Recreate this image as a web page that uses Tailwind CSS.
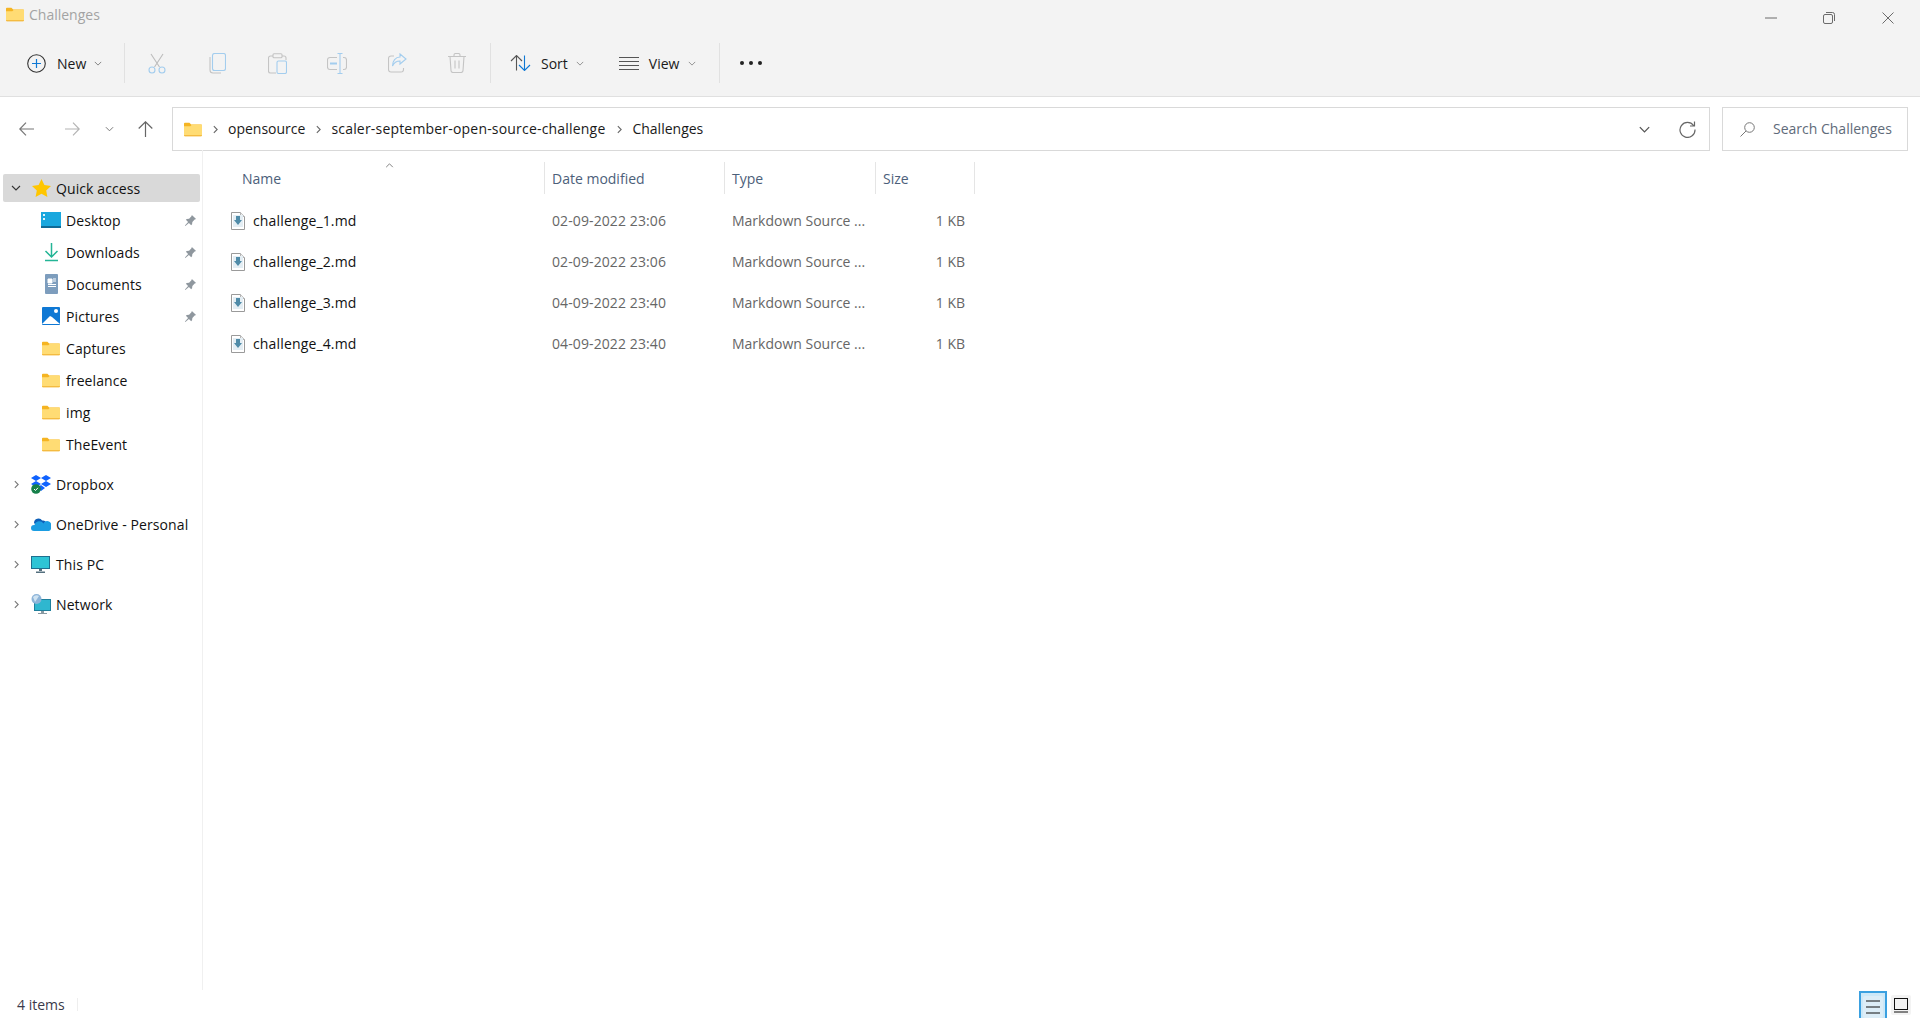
<!DOCTYPE html>
<html lang="en">
<head>
<meta charset="UTF-8" />
<title>Challenges</title>
<script src="https://cdn.jsdelivr.net/npm/@tailwindcss/browser@4"></script>
</head>
<body class="h-[1018px] w-[1920px] overflow-hidden bg-white font-['Open_Sans','Noto_Sans',sans-serif] text-[14px] text-[#1a1a1a]">
<svg class="hidden">
  <symbol id="folder" viewBox="0 0 20 16">
    <path d="M0 1.500a1 1 0 0 1 1-1h5l2 2h11a1 1 0 0 1 1 1v10a1 1 0 0 1-1 1H1a1 1 0 0 1-1-1z" fill="#f5b422"/>
    <path d="M0 4.500h7l2-2h10a1 1 0 0 1 1 1v11a1 1 0 0 1-1 1H1a1 1 0 0 1-1-1z" fill="#ffdc74"/>
    <path d="M0 14.500h20a1 1 0 0 1-1 1H1a1 1 0 0 1-1-1z" fill="#f0b030"/>
  </symbol>
  <symbol id="pin" viewBox="0 0 14 14">
    <path d="M8.500 1l4.500 4.500-1.500.5-2.500 2.500-.3 2.500-1 1-2.400-2.400L1.500 13 1 12.500l3.400-3.800L2 6.300l1-1 2.500-.3L8 2.500z" fill="#8f979e"/>
  </symbol>
  <symbol id="chev-down" viewBox="0 0 10 6">
    <path d="M1 1l4 4 4-4" fill="none" stroke="currentColor" stroke-width="1.100"/>
  </symbol>
  <symbol id="chev-right" viewBox="0 0 6 10">
    <path d="M1 1l4 4-4 4" fill="none" stroke="currentColor" stroke-width="1.300"/>
  </symbol>
  <symbol id="md" viewBox="0 0 14 18">
    <path d="M.5.500h9l4 4v13H.5z" fill="#fff" stroke="#9a9a9a"/>
    <path d="M9.500.500v4h4" fill="#eee" stroke="#b5b5b5"/>
    <rect x="2" y="3" width="10" height="12" fill="#e4eef4"/>
    <path d="M5 4h4v4h2l-4 5-4-5h2z" fill="#4f8ba8"/>
  </symbol>
</svg>

<!-- title bar + command bar -->
<header class="h-[97px] border-b border-[#e0e0e0] bg-[#f3f3f3]">
  <div class="flex h-[29px] items-center">
    <svg class="ml-[6px] h-[15px] w-[18px]"><use href="#folder"/></svg>
    <span class="ml-[5px] text-[14px] text-[#a3a3a3]">Challenges</span>
    <div class="ml-auto mt-[6px] flex items-center text-[#6b6b6b]">
      <svg class="mr-[46px] h-[12px] w-[12px]" viewBox="0 0 12 12"><path d="M0 6h12" stroke="currentColor"/></svg>
      <svg class="mr-[47px] h-[12px] w-[12px]" viewBox="0 0 12 12"><rect x=".5" y="2.500" width="9" height="9" rx="1.500" fill="none" stroke="currentColor"/><path d="M3 .5h6.500a2 2 0 0 1 2 2V9" fill="none" stroke="currentColor"/></svg>
      <svg class="mr-[26px] h-[12px] w-[12px]" viewBox="0 0 12 12"><path d="M.5.500l11 11M11.500.500l-11 11" stroke="currentColor"/></svg>
    </div>
  </div>
  <div class="flex h-[67px] items-start pt-[14px]">
    <!-- New -->
    <div class="flex h-[40px] w-[124px] items-center pl-[27px]">
      <svg class="h-[19px] w-[19px]" viewBox="0 0 19 19"><circle cx="9.500" cy="9.500" r="8.800" fill="none" stroke="#333" stroke-width="1.100"/><path d="M9.500 5v9M5 9.500h9" stroke="#0f78d4" stroke-width="1.200"/></svg>
      <span class="ml-[11px] text-[14px]">New</span>
      <svg class="ml-[8px] h-[5px] w-[8px] text-[#777]"><use href="#chev-down"/></svg>
    </div>
    <div class="h-[40px] w-px bg-[#e1e1e1]"></div>
    <!-- disabled actions -->
    <div class="flex h-[40px] w-[365px] items-center pl-[2px]">
      <div class="flex w-[60px] justify-center">
        <svg class="h-[21px] w-[18px]" viewBox="0 0 18 21" fill="none" stroke-width="1.100"><path d="M3 1l8.500 13M15 1L6.500 14" stroke="#bcbcbc"/><circle cx="4" cy="17" r="3" stroke="#a3cdee"/><circle cx="14" cy="17" r="3" stroke="#a3cdee"/></svg>
      </div>
      <div class="flex w-[60px] justify-center">
        <svg class="h-[21px] w-[17px]" viewBox="0 0 17 21" fill="none" stroke-width="1.100"><path d="M1 4v13a3 3 0 0 0 3 3h8" stroke="#c4c4c4"/><rect x="3.500" y=".5" width="13" height="17" rx="2" stroke="#a3cdee"/></svg>
      </div>
      <div class="flex w-[60px] justify-center">
        <svg class="h-[21px] w-[19px]" viewBox="0 0 19 21" fill="none" stroke-width="1.100"><path d="M5 3H2.500a2 2 0 0 0-2 2v13a2 2 0 0 0 2 2H8M14 3h2a2 2 0 0 1 2 2v2" stroke="#c4c4c4"/><rect x="5" y=".8" width="9" height="4" rx="1" stroke="#c4c4c4"/><rect x="9" y="8" width="9.500" height="12.500" rx="1.500" stroke="#a3cdee"/></svg>
      </div>
      <div class="flex w-[60px] justify-center">
        <svg class="h-[21px] w-[20px]" viewBox="0 0 20 21" fill="none" stroke-width="1.100"><path d="M10 4.500H3a2.500 2.500 0 0 0-2.500 2.500v7A2.500 2.500 0 0 0 3 16.500h7M16 4.500h1a2.500 2.500 0 0 1 2.500 2.500v7a2.500 2.500 0 0 1-2.500 2.500h-1" stroke="#c4c4c4"/><path d="M13 .5v20M10.500.5h5M10.500 20.500h5" stroke="#a3cdee"/><path d="M3 10.500h7" stroke="#a3cdee" stroke-width="2"/></svg>
      </div>
      <div class="flex w-[60px] justify-center">
        <svg class="h-[20px] w-[19px]" viewBox="0 0 19 20" fill="none" stroke-width="1.100"><path d="M6 3H3a2.500 2.500 0 0 0-2.500 2.500v11A2.500 2.500 0 0 0 3 19h10a2.500 2.500 0 0 0 2.500-2.500V15" stroke="#c4c4c4"/><path d="M12 1l6 5-6 5V8C8 8 6 9.500 4.500 13 4.500 8 7.500 4 12 4z" stroke="#a3cdee"/></svg>
      </div>
      <div class="flex w-[60px] justify-center">
        <svg class="h-[20px] w-[18px]" viewBox="0 0 18 20" fill="none" stroke="#c4c4c4" stroke-width="1.100"><path d="M0 3.500h18M6 3.500V2a1.500 1.500 0 0 1 1.500-1.500h3A1.500 1.500 0 0 1 12 2v1.500M2 3.500l1 14a2 2 0 0 0 2 2h8a2 2 0 0 0 2-2l1-14M7 7.500v8M11 7.500v8"/></svg>
      </div>
    </div>
    <div class="h-[40px] w-px bg-[#e1e1e1]"></div>
    <!-- Sort / View -->
    <div class="flex h-[40px] w-[228px] items-center pl-[19px]">
      <svg class="h-[16px] w-[21px]" viewBox="0 0 21 16" fill="none" stroke-width="1.100"><path d="M1 6l5.500-5.500L12 6M6.500 1v14.500" stroke="#555"/><path d="M9 10l5.500 5.500L20 10M14.500 15V.5" stroke="#0f78d4"/></svg>
      <span class="ml-[10px]">Sort</span>
      <svg class="ml-[8px] h-[5px] w-[8px] text-[#888]"><use href="#chev-down"/></svg>
      <svg class="ml-[35px] h-[13px] w-[20px]" viewBox="0 0 20 13"><path d="M0 .5h20M0 4.500h20M0 8.500h20M0 12.500h20" stroke="#555"/></svg>
      <span class="ml-[10px]">View</span>
      <svg class="ml-[9px] h-[5px] w-[8px] text-[#888]"><use href="#chev-down"/></svg>
    </div>
    <div class="h-[40px] w-px bg-[#e1e1e1]"></div>
    <div class="flex h-[40px] items-center gap-[5px] pl-[20px]">
      <span class="size-[4px] rounded-full bg-[#222]"></span>
      <span class="size-[4px] rounded-full bg-[#222]"></span>
      <span class="size-[4px] rounded-full bg-[#222]"></span>
    </div>
  </div>
</header>

<!-- navigation row -->
<div class="flex h-[53px] items-start pt-[10px]">
  <div class="flex h-[43px] w-[172px] items-center text-[#777]">
    <svg class="ml-[19px] h-[14px] w-[15px]" viewBox="0 0 15 14" fill="none" stroke="#777" stroke-width="1.200"><path d="M7 .7L.8 7 7 13.300M1 7h14"/></svg>
    <svg class="ml-[31px] h-[14px] w-[15px]" viewBox="0 0 15 14" fill="none" stroke="#b4b4b4" stroke-width="1.200"><path d="M8 .7L14.200 7 8 13.300M14 7H0"/></svg>
    <svg class="ml-[25px] h-[6px] w-[9px]"><use href="#chev-down"/></svg>
    <svg class="ml-[24px] h-[16px] w-[15px]" viewBox="0 0 15 16" fill="none" stroke="#666" stroke-width="1.200"><path d="M.7 7.500L7.500.8l6.800 6.700M7.500 1v15"/></svg>
  </div>
  <div class="flex h-[44px] w-[1538px] items-center border border-[#d9d9d9]">
    <svg class="ml-[11px] h-[15px] w-[18px]"><use href="#folder"/></svg>
    <svg class="ml-[11px] h-[9px] w-[5px] text-[#666]"><use href="#chev-right"/></svg>
    <span class="-mt-[2px] ml-[10px]">opensource</span>
    <svg class="ml-[11px] h-[9px] w-[5px] text-[#666]"><use href="#chev-right"/></svg>
    <span class="-mt-[2px] ml-[10px] tracking-[0.19px]">scaler-september-open-source-challenge</span>
    <svg class="ml-[12px] h-[9px] w-[5px] text-[#666]"><use href="#chev-right"/></svg>
    <span class="-mt-[2px] ml-[10px]">Challenges</span>
    <svg class="ml-auto h-[7px] w-[13px] text-[#555]"><use href="#chev-down"/></svg>
    <svg class="ml-[28px] mr-[13px] h-[17px] w-[17px]" viewBox="0 0 17 17" fill="none" stroke="#666" stroke-width="1.200"><path d="M14.600 4.500A7.500 7.500 0 1 0 16 8.500M15.500 .5v4.500H11"/></svg>
  </div>
  <div class="ml-[12px] flex h-[44px] w-[186px] items-center border border-[#d9d9d9]">
    <svg class="ml-[17px] h-[15px] w-[15px]" viewBox="0 0 15 15" fill="none" stroke="#777"><circle cx="9.500" cy="5.500" r="4.800"/><path d="M6 9L.5 14.500"/></svg>
    <span class="-mt-[1px] ml-[18px] text-[#5f6b7a]">Search Challenges</span>
  </div>
</div>

<div class="flex h-[840px]">
  <!-- sidebar -->
  <nav class="h-[840px] w-[203px] border-r border-[#f0f0f0] pl-[3px] pr-[2px] pt-[24px] text-[14px] tracking-[0.1px] text-[#111]">
    <div class="flex h-[28px] items-center rounded-[2px] bg-[#d9d9d9]">
      <svg class="ml-[8px] h-[6px] w-[10px] text-[#333]"><use href="#chev-down"/></svg>
      <svg class="ml-[11px] h-[18px] w-[19px]" viewBox="0 0 19 18"><path d="M9.500 0l2.900 6 6.600.9-4.800 4.500 1.200 6.600-5.900-3.200L3.600 18l1.200-6.600L0 6.900 6.600 6z" fill="#ffc600"/></svg>
      <span class="ml-[5px]">Quick access</span>
    </div>
    <ul class="pt-[2px]">
      <li class="flex h-[32px] items-center pl-[38px]">
        <svg class="h-[16px] w-[20px]" viewBox="0 0 20 16"><rect width="20" height="16" rx="1" fill="#1aa0d8"/><path d="M0 0h20v14H0z" fill="#19a7de"/><path d="M0 14h20v2H0z" fill="#0f6a96"/><path d="M2 2h2v2H2zM2 6h2v2H2z" fill="#dff4fb"/></svg>
        <span class="ml-[5px]">Desktop</span>
        <svg class="ml-auto mr-[3px] h-[13px] w-[13px]"><use href="#pin"/></svg>
      </li>
      <li class="flex h-[32px] items-center pl-[38px]">
        <svg class="h-[20px] w-[20px]" viewBox="0 0 20 20" fill="none" stroke="#24b596" stroke-width="1.500"><path d="M4 18.500h13M10.500 1v13M4.500 9l6 6 6-6"/></svg>
        <span class="ml-[5px]">Downloads</span>
        <svg class="ml-auto mr-[3px] h-[13px] w-[13px]"><use href="#pin"/></svg>
      </li>
      <li class="flex h-[32px] items-center pl-[38px]">
        <svg class="h-[20px] w-[20px]" viewBox="0 0 20 20"><rect x="4" width="13" height="20" rx="1" fill="#7d9dbd"/><path d="M7 5h4v4H7zM12 5h3M12 7h3M7 10.500h8M7 12.500h8" stroke="#fff" fill="#fff"/></svg>
        <span class="ml-[5px]">Documents</span>
        <svg class="ml-auto mr-[3px] h-[13px] w-[13px]"><use href="#pin"/></svg>
      </li>
      <li class="flex h-[32px] items-center pl-[38px]">
        <svg class="h-[18px] w-[20px]" viewBox="0 0 20 18"><rect x="1" width="18" height="18" rx="1" fill="#0f78d4"/><path d="M1 17l8-8 2 1 8 7z" fill="#fff"/><circle cx="15" cy="4" r="2" fill="#fff"/></svg>
        <span class="ml-[5px]">Pictures</span>
        <svg class="ml-auto mr-[3px] h-[13px] w-[13px]"><use href="#pin"/></svg>
      </li>
      <li class="flex h-[32px] items-center pl-[39px]"><svg class="h-[15px] w-[18px]"><use href="#folder"/></svg><span class="ml-[6px]">Captures</span></li>
      <li class="flex h-[32px] items-center pl-[39px]"><svg class="h-[15px] w-[18px]"><use href="#folder"/></svg><span class="ml-[6px]">freelance</span></li>
      <li class="flex h-[32px] items-center pl-[39px]"><svg class="h-[15px] w-[18px]"><use href="#folder"/></svg><span class="ml-[6px]">img</span></li>
      <li class="flex h-[32px] items-center pl-[39px]"><svg class="h-[15px] w-[18px]"><use href="#folder"/></svg><span class="ml-[6px]">TheEvent</span></li>
    </ul>
    <ul class="pt-[4px]">
      <li class="flex h-[40px] items-center">
        <svg class="ml-[11px] h-[9px] w-[5px] text-[#777]"><use href="#chev-right"/></svg>
        <svg class="ml-[12px] h-[19px] w-[20px]" viewBox="0 0 20 19"><path d="M5 0l5 3-5 3-5-3zM15 0l5 3-5 3-5-3zM5 6l5 3-5 3-5-3zM15 6l5 3-5 3-5-3zM10 10l4 3-4 3-4-3z" fill="#0f62fe"/><circle cx="5" cy="14" r="4.800" fill="#16804a"/><path d="M3 14l1.500 1.500L7 12.800" fill="none" stroke="#fff"/></svg>
        <span class="ml-[5px]">Dropbox</span>
      </li>
      <li class="flex h-[40px] items-center">
        <svg class="ml-[11px] h-[9px] w-[5px] text-[#777]"><use href="#chev-right"/></svg>
        <svg class="ml-[12px] h-[13px] w-[20px]" viewBox="0 0 20 13"><path d="M3 5a4.500 4.500 0 0 1 8.200-2.500A3.500 3.500 0 0 1 15.500 6L8 10z" fill="#0d5fb8"/><path d="M0 10a3 3 0 0 1 3-3h.5a5 5 0 0 1 9-1.500A4 4 0 0 1 20 9a3.500 3.500 0 0 1-2 4H3a3 3 0 0 1-3-3z" fill="#1b9de2"/></svg>
        <span class="ml-[5px]">OneDrive - Personal</span>
      </li>
      <li class="flex h-[40px] items-center">
        <svg class="ml-[11px] h-[9px] w-[5px] text-[#777]"><use href="#chev-right"/></svg>
        <svg class="ml-[12px] h-[17px] w-[19px]" viewBox="0 0 19 17"><rect width="19" height="13" fill="#1f6f8f"/><rect x="1" y="1" width="17" height="11" fill="#2ec4d6"/><path d="M8 13h3v2H8zM5 15.500h9v1.500H5z" fill="#55707f"/></svg>
        <span class="ml-[6px]">This PC</span>
      </li>
      <li class="flex h-[40px] items-center">
        <svg class="ml-[11px] h-[9px] w-[5px] text-[#777]"><use href="#chev-right"/></svg>
        <svg class="ml-[12px] h-[20px] w-[20px]" viewBox="0 0 20 20"><rect x="3" y="5" width="17" height="12" fill="#1f7f9c"/><rect x="4" y="6" width="15" height="10" fill="#2fb7cf"/><path d="M10 17h3v2h-3zM7 19h9v1H7z" fill="#8a9aa3"/><circle cx="5.500" cy="5" r="5" fill="#8db4d8"/><path d="M2 3a5 5 0 0 1 6-1L4 8z" fill="#cfe3f2"/></svg>
        <span class="ml-[5px]">Network</span>
      </li>
    </ul>
  </nav>

  <!-- file list -->
  <main class="relative flex-1 text-[14px]">
    <svg class="absolute left-[182px] top-[13px] h-[5px] w-[9px] rotate-180 text-[#777]"><use href="#chev-down"/></svg>
    <div class="ml-[39px] mt-[12px] flex h-[32px] items-center text-[#4c607a]">
      <div class="flex h-full w-[303px] items-center border-r border-[#e5e5e5]">Name</div>
      <div class="flex h-full w-[180px] items-center border-r border-[#e5e5e5] pl-[7px]">Date modified</div>
      <div class="flex h-full w-[151px] items-center border-r border-[#e5e5e5] pl-[7px]">Type</div>
      <div class="flex h-full w-[99px] items-center border-r border-[#e5e5e5] pl-[7px]">Size</div>
    </div>
    <ul class="ml-[28px] pt-[6px]">
      <li class="flex h-[41px] items-center whitespace-nowrap">
        <svg class="h-[18px] w-[14px]"><use href="#md"/></svg>
        <span class="ml-[8px] w-[299px] tracking-[0.15px] text-[#111]">challenge_1.md</span>
        <span class="w-[180px] tracking-[0.1px] text-[#666]">02-09-2022 23:06</span>
        <span class="w-[132px] text-[#666]">Markdown Source ...</span>
        <span class="w-[101px] text-right text-[#666]">1 KB</span>
      </li>
      <li class="flex h-[41px] items-center whitespace-nowrap">
        <svg class="h-[18px] w-[14px]"><use href="#md"/></svg>
        <span class="ml-[8px] w-[299px] tracking-[0.15px] text-[#111]">challenge_2.md</span>
        <span class="w-[180px] tracking-[0.1px] text-[#666]">02-09-2022 23:06</span>
        <span class="w-[132px] text-[#666]">Markdown Source ...</span>
        <span class="w-[101px] text-right text-[#666]">1 KB</span>
      </li>
      <li class="flex h-[41px] items-center whitespace-nowrap">
        <svg class="h-[18px] w-[14px]"><use href="#md"/></svg>
        <span class="ml-[8px] w-[299px] tracking-[0.15px] text-[#111]">challenge_3.md</span>
        <span class="w-[180px] tracking-[0.1px] text-[#666]">04-09-2022 23:40</span>
        <span class="w-[132px] text-[#666]">Markdown Source ...</span>
        <span class="w-[101px] text-right text-[#666]">1 KB</span>
      </li>
      <li class="flex h-[41px] items-center whitespace-nowrap">
        <svg class="h-[18px] w-[14px]"><use href="#md"/></svg>
        <span class="ml-[8px] w-[299px] tracking-[0.15px] text-[#111]">challenge_4.md</span>
        <span class="w-[180px] tracking-[0.1px] text-[#666]">04-09-2022 23:40</span>
        <span class="w-[132px] text-[#666]">Markdown Source ...</span>
        <span class="w-[101px] text-right text-[#666]">1 KB</span>
      </li>
    </ul>
  </main>
</div>

<!-- status bar -->
<footer class="flex h-[28px] items-start">
  <div class="flex h-[28px] items-center py-[2px] pl-[17px] text-[#3a3a4a]">
    <span>4 items</span>
    <span class="ml-[12px] h-[13px] w-px bg-[#eeeeee]"></span>
  </div>
  <div class="ml-auto mt-[1px] flex h-[27px] w-[28px] justify-center border-x-2 border-t-2 border-[#3aa0e0] bg-[#cce8f8] pt-[3px]">
    <div class="flex h-[22px] w-[20px] items-center justify-center rounded-[2px] bg-[#dcedf7]">
      <svg class="h-[14px] w-[14px]" viewBox="0 0 14 14"><path d="M0 1h14M0 7h14M0 13h14" stroke="#111"/></svg>
    </div>
  </div>
  <div class="ml-[4px] mr-[9px] mt-[5px] flex size-[20px] items-center justify-center rounded-[2px] bg-[#f3f3f3]">
    <svg class="h-[15px] w-[14px]" viewBox="0 0 14 15" fill="none" stroke="#111"><rect x=".5" y=".5" width="13" height="11"/><path d="M0 14h14"/></svg>
  </div>
</footer>
</body>
</html>
